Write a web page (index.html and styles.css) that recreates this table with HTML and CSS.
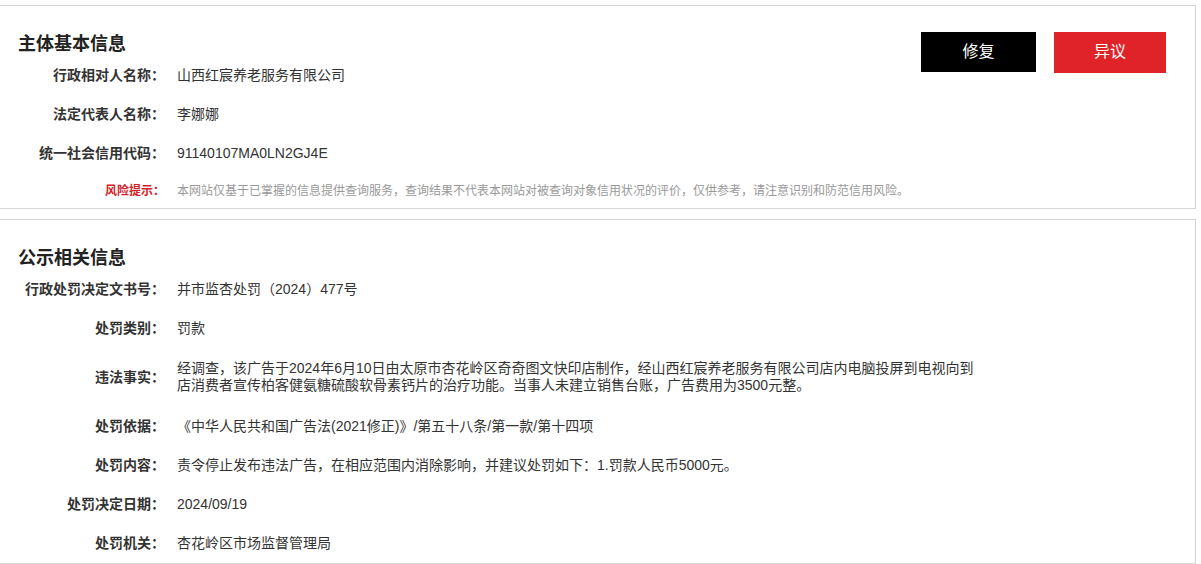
FILE: index.html
```html
<!doctype html>
<html lang="zh-CN">
<head>
  <meta charset="UTF-8">
  <title>信用信息</title>
  <link rel="stylesheet" href="styles.css">
</head>
<body>
  <div class="wrap">
    <!-- 主体基本信息 -->
    <div class="card card-main">
      <div class="info">
        <h2 class="card-title">主体基本信息</h2>
        <div class="row">
          <span class="label">行政相对人名称：</span>
          <span class="value">山西红宸养老服务有限公司</span>
        </div>
        <div class="row">
          <span class="label">法定代表人名称：</span>
          <span class="value">李娜娜</span>
        </div>
        <div class="row">
          <span class="label">统一社会信用代码：</span>
          <span class="value">91140107MA0LN2GJ4E</span>
        </div>
        <div class="row row-risk">
          <span class="label">风险提示：</span>
          <span class="value">本网站仅基于已掌握的信息提供查询服务，查询结果不代表本网站对被查询对象信用状况的评价，仅供参考，请注意识别和防范信用风险。</span>
        </div>
      </div>
      <div class="btns">
        <a href="javascript:void(0);" class="btn btn-fix">修复</a>
        <a href="javascript:void(0);" class="btn btn-obj">异议</a>
      </div>
    </div>

    <!-- 公示相关信息 -->
    <div class="card">
      <div class="info">
        <h2 class="card-title">公示相关信息</h2>
        <div class="row">
          <span class="label">行政处罚决定文书号：</span>
          <span class="value">并市监杏处罚（2024）477号</span>
        </div>
        <div class="row">
          <span class="label">处罚类别：</span>
          <span class="value">罚款</span>
        </div>
        <div class="row row-multi">
          <span class="label">违法事实：</span>
          <span class="value">经调查，该广告于2024年6月10日由太原市杏花岭区奇奇图文快印店制作，经山西红宸养老服务有限公司店内电脑投屏到电视向到<br>店消费者宣传柏客健氨糖硫酸软骨素钙片的治疗功能。当事人未建立销售台账，广告费用为3500元整。</span>
        </div>
        <div class="row">
          <span class="label">处罚依据：</span>
          <span class="value">《中华人民共和国广告法(2021修正)》/第五十八条/第一款/第十四项</span>
        </div>
        <div class="row">
          <span class="label">处罚内容：</span>
          <span class="value">责令停止发布违法广告，在相应范围内消除影响，并建议处罚如下：1.罚款人民币5000元。</span>
        </div>
        <div class="row">
          <span class="label">处罚决定日期：</span>
          <span class="value">2024/09/19</span>
        </div>
        <div class="row">
          <span class="label">处罚机关：</span>
          <span class="value">杏花岭区市场监督管理局</span>
        </div>
      </div>
    </div>
  </div>
</body>
</html>
```

FILE: styles.css
```css
* {
  margin: 0;
  padding: 0;
  box-sizing: border-box;
}
body {
  background-color: #f2f2f2;
  font-family: "Liberation Sans", "Noto Sans CJK SC", sans-serif;
  color: #333;
}
.wrap {
  background-color: #fff;
  padding-top: 5px;
}
.card {
  display: flex;
  margin: 0 5px 10px -1px;
  padding-top: 26px;
  border: 1px solid #d6d6d6;
  background-color: #fff;
}
.card:last-child {
  margin-bottom: 0;
}
.info {
  flex: 1;
}
.card-title {
  padding-left: 18px;
  font-size: 18px;
  line-height: 24px;
  font-weight: bold;
  color: #222;
}
.row {
  display: flex;
  align-items: center;
  padding: 11px 0;
  font-size: 14px;
  line-height: 17px;
}
.row .label {
  width: 165px;
  flex-shrink: 0;
  text-align: right;
  font-weight: bold;
  color: #333;
}
.row .value {
  padding-left: 12px;
  max-width: 820px;
  color: #333;
}
.row-multi {
  padding: 12px 0 13px;
}
.row-risk {
  padding: 11px 0 9px;
  font-size: 12px;
  line-height: 15px;
}
.row-risk .label {
  color: #d2232a;
}
.row-risk .value {
  color: #999;
}
.btns {
  display: flex;
  align-items: flex-start;
  gap: 18px;
  padding-right: 29px;
}
.btn {
  display: block;
  height: 40px;
  line-height: 40px;
  font-size: 16px;
  color: #fff;
  text-align: center;
  text-decoration: none;
}
.btn-fix {
  width: 115px;
  background-color: #000;
}
.btn-obj {
  width: 112px;
  height: 41px;
  background-color: #e02328;
}
```
